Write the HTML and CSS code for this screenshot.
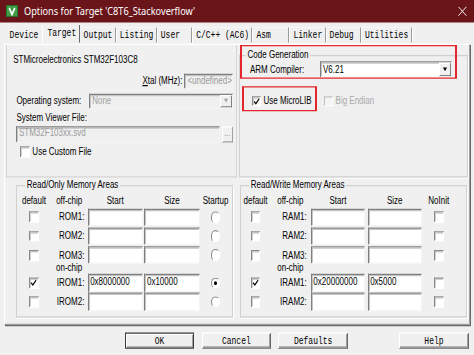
FILE: index.html
```html
<!DOCTYPE html>
<html lang="en">
<head>
    <meta charset="UTF-8">
    <meta name="viewport" content="width=device-width, initial-scale=1.0">
    <title>Options for Target</title>
    <link rel="stylesheet" href="styles.css">
</head>
<body>
    <div class="window">
        <div class="titlebar">
            <svg class="app-icon" viewBox="0 0 15 12" preserveAspectRatio="none">
                <rect width="15" height="12" fill="#256f2a"/>
                <rect x="1" y="1" width="13" height="10" fill="#3f9e46"/>
                <polyline points="4,3 7.5,9.5 11,3" fill="none" stroke="#fff" stroke-width="2"/>
            </svg>
            <span class="title">Options for Target 'C8T6_Stackoverflow'</span>
            <svg class="close" viewBox="0 0 11 10" preserveAspectRatio="none">
                <line x1="0.5" y1="0.5" x2="10.5" y2="9.5" stroke="#fff" stroke-width="1"/>
                <line x1="10.5" y1="0.5" x2="0.5" y2="9.5" stroke="#fff" stroke-width="1"/>
            </svg>
        </div>

        <div class="tabs">
            <span class="tab tab-first">Device</span>
            <span class="tab tab-active">Target</span>
            <span class="tab">Output</span>
            <span class="tab">Listing</span>
            <span class="tab tab-user">User</span>
            <span class="tab">C/C++ (AC6)</span>
            <span class="tab tab-asm">Asm</span>
            <span class="tab">Linker</span>
            <span class="tab tab-debug">Debug</span>
            <span class="tab">Utilities</span>
        </div>

        <div class="page">
            <div class="top">
                <div class="device">
                    <div class="chip-name">STMicroelectronics STM32F103C8</div>
                    <div class="xtal-row">
                        <span class="xtal-label"><u>X</u>tal (MHz):</span>
                        <span class="field field-disabled xtal">&lt;undefined&gt;</span>
                    </div>
                    <div class="os-row">
                        <span>Operating system:</span>
                        <div class="combo combo-disabled os">
                            <span class="combo-text">None</span>
                            <span class="combo-btn"><i class="arrow"></i></span>
                        </div>
                    </div>
                    <div class="svf-label">System Viewer File:</div>
                    <div class="svf-row">
                        <span class="field field-disabled svf">STM32F103xx.svd</span>
                        <span class="browse">...</span>
                    </div>
                    <div class="check-label custom"><span class="check"></span>Use Custom File</div>
                </div>

                <fieldset class="group codegen">
                    <legend>Code Generation</legend>
                    <div class="compiler-row">
                        <span class="compiler-label">ARM Compiler:</span>
                        <div class="combo compiler">
                            <span class="combo-text">V6.21</span>
                            <span class="combo-btn"><i class="arrow"></i></span>
                        </div>
                    </div>
                    <div class="lib-row">
                        <div class="check-label">
                            <span class="check"><svg viewBox="0 0 10 9" preserveAspectRatio="none"><polyline points="1.5,4.5 4,7 8.5,1.5" fill="none" stroke="#000" stroke-width="1.6"/></svg></span>Use MicroLIB
                        </div>
                        <div class="check-label check-disabled endian"><span class="check"></span>Big Endian</div>
                    </div>
                </fieldset>
            </div>

            <div class="memory">
                <fieldset class="group mem rom">
                    <legend>Read/Only Memory Areas</legend>
                    <div class="mem-grid">
                        <span class="hdr">default</span><span class="hdr">off-chip</span><span class="hdr">Start</span><span class="hdr">Size</span><span class="hdr">Startup</span>

                        <span class="cell-mark"><span class="check"></span></span>
                        <span class="mem-label">ROM1:</span>
                        <span class="mem-input"></span><span class="mem-input"></span>
                        <span class="cell-mark"><span class="radio"></span></span>

                        <span class="cell-mark"><span class="check"></span></span>
                        <span class="mem-label">ROM2:</span>
                        <span class="mem-input"></span><span class="mem-input"></span>
                        <span class="cell-mark"><span class="radio"></span></span>

                        <span class="cell-mark"><span class="check"></span></span>
                        <span class="mem-label">ROM3:</span>
                        <span class="mem-input"></span><span class="mem-input"></span>
                        <span class="cell-mark"><span class="radio"></span></span>

                        <span></span><span class="on-chip">on-chip</span><span></span><span></span><span></span>

                        <span class="cell-mark"><span class="check"><svg viewBox="0 0 10 9" preserveAspectRatio="none"><polyline points="1.5,4.5 4,7 8.5,1.5" fill="none" stroke="#000" stroke-width="1.6"/></svg></span></span>
                        <span class="mem-label">IROM1:</span>
                        <span class="mem-input">0x8000000</span><span class="mem-input">0x10000</span>
                        <span class="cell-mark"><span class="radio radio-on"></span></span>

                        <span class="cell-mark"><span class="check"></span></span>
                        <span class="mem-label">IROM2:</span>
                        <span class="mem-input"></span><span class="mem-input"></span>
                        <span class="cell-mark"><span class="radio"></span></span>
                    </div>
                </fieldset>

                <fieldset class="group mem ram">
                    <legend>Read/Write Memory Areas</legend>
                    <div class="mem-grid">
                        <span class="hdr">default</span><span class="hdr">off-chip</span><span class="hdr">Start</span><span class="hdr">Size</span><span class="hdr">NoInit</span>

                        <span class="cell-mark"><span class="check"></span></span>
                        <span class="mem-label">RAM1:</span>
                        <span class="mem-input"></span><span class="mem-input"></span>
                        <span class="cell-mark"><span class="check"></span></span>

                        <span class="cell-mark"><span class="check"></span></span>
                        <span class="mem-label">RAM2:</span>
                        <span class="mem-input"></span><span class="mem-input"></span>
                        <span class="cell-mark"><span class="check"></span></span>

                        <span class="cell-mark"><span class="check"></span></span>
                        <span class="mem-label">RAM3:</span>
                        <span class="mem-input"></span><span class="mem-input"></span>
                        <span class="cell-mark"><span class="check"></span></span>

                        <span></span><span class="on-chip">on-chip</span><span></span><span></span><span></span>

                        <span class="cell-mark"><span class="check"><svg viewBox="0 0 10 9" preserveAspectRatio="none"><polyline points="1.5,4.5 4,7 8.5,1.5" fill="none" stroke="#000" stroke-width="1.6"/></svg></span></span>
                        <span class="mem-label">IRAM1:</span>
                        <span class="mem-input">0x20000000</span><span class="mem-input">0x5000</span>
                        <span class="cell-mark"><span class="check"></span></span>

                        <span class="cell-mark"><span class="check"></span></span>
                        <span class="mem-label">IRAM2:</span>
                        <span class="mem-input"></span><span class="mem-input"></span>
                        <span class="cell-mark"><span class="check"></span></span>
                    </div>
                </fieldset>
            </div>

            <!-- red highlight frames drawn over the dialog -->
            <div class="mark mark-compiler"></div>
            <div class="mark mark-microlib"></div>
        </div>

        <div class="buttons">
            <span class="btn btn-default">OK</span>
            <span class="btn">Cancel</span>
            <span class="btn">Defaults</span>
            <span class="btn btn-help">Help</span>
        </div>
    </div>
</body>
</html>
```

FILE: styles.css
```css
* {
    box-sizing: border-box;
}
body {
    margin: 0;
    height: 355px;
    background: #f0f0f0;
    font-family: "Liberation Sans", Arial, sans-serif;
    font-size: 8px;
    color: #000;
}
/* the screenshot is squeezed sideways: lay out narrow and stretch it vertically */
.window {
    width: 474px;
    height: 284px;
    background: #f0f0f0;
    transform: scaleY(1.25);
    transform-origin: 0 0;
}
.titlebar {
    height: 17.6px;
    display: flex;
    align-items: center;
    padding-left: 5.6px;
    background: #6a1519;
    color: #fff;
}
.app-icon {
    width: 12px;
    height: 9.6px;
    margin-right: 6.4px;
}
.title {
    font-family: "Noto Sans", sans-serif;
    font-size: 9.2px;
}
.close {
    width: 8.8px;
    height: 8px;
    margin-left: auto;
    margin-right: 7.2px;
}

/* tabs */
.tabs {
    height: 17.6px;
    display: flex;
    align-items: flex-start;
    padding: 4px 0 0 4.8px;
    font-family: "Liberation Mono", monospace;
    font-size: 8px;
}
.tab {
    height: 12.8px;
    line-height: 12.8px;
    padding: 0 2.4px 0 4px;
    border-right: 1px solid #9a9a9a;
    box-shadow: 1px 0 0 #fff;
    white-space: pre;
}
.tab-first {
    padding: 0 3.2px 0 4.8px;
    border-right: 0;
    box-shadow: none;
}
.tab-active {
    margin-top: -1.6px;
    height: 14.4px;
    line-height: 14px;
    padding-left: 4.8px;
    border-left: 1px solid #fff;
    border-right-color: #696969;
    box-shadow: none;
}
.tab-user {
    padding-right: 11.2px;
}
.tab-asm {
    padding-right: 17.6px;
}
.tab-debug {
    padding-right: 6.4px;
}

/* tab page */
.page {
    position: relative;
    width: 465.6px;
    height: 224.8px;
    margin-left: 4px;
    border: 1px solid;
    border-color: #fff #a0a0a0 #a0a0a0 #fff;
    box-shadow: 1px 1px 0 #696969;
}
.top {
    display: flex;
    height: 105.6px;
}
.device {
    width: 231.2px;
    margin-left: 0.8px;
    border: 1px solid #d5d5d5;
    border-top: 0;
    padding: 5.6px 3.2px 0 6.4px;
}
.chip-name {
    line-height: 11.2px;
}
.xtal-row {
    display: flex;
    justify-content: flex-end;
    align-items: center;
    height: 12.8px;
    margin-top: 5.6px;
}
.xtal-label {
    margin-right: 1.6px;
}
.xtal {
    width: 48.8px;
}
.os-row {
    display: flex;
    justify-content: space-between;
    align-items: center;
    height: 12.8px;
    margin-top: 3.2px;
    padding-left: 3.2px;
}
.os {
    width: 144px;
}
.svf-label {
    margin-top: 2.4px;
    line-height: 9.6px;
    padding-left: 3.2px;
}
.svf-row {
    display: flex;
    height: 12.8px;
    margin-top: 1.6px;
    padding-left: 2.4px;
}
.svf {
    width: 204.8px;
}
.browse {
    width: 11.2px;
    height: 12.8px;
    margin-left: 1.6px;
    border: 1px solid;
    border-color: #fff #a0a0a0 #a0a0a0 #fff;
    color: #a0a0a0;
    text-align: center;
    line-height: 10.8px;
}
.custom {
    height: 9.6px;
    margin-top: 3.2px;
    padding-left: 7.2px;
}

/* group boxes */
.group {
    margin: 0;
    padding: 0;
    min-inline-size: 0;
    border: 1px solid #d0d0d0;
    box-shadow: 1px 1px 0 #fff;
}
.group legend {
    padding: 0 1.6px;
    line-height: 9.6px;
}
.codegen {
    width: 229.6px;
    height: 102.4px;
    margin: 3.2px 0 0 1.6px;
    padding: 0 4.8px 0 6.4px;
}
.compiler-row {
    display: flex;
    align-items: center;
    height: 12.8px;
    margin-left: 4px;
}
.compiler-label {
    width: 69.6px;
}
.compiler {
    width: 132.8px;
}
.lib-row {
    display: flex;
    align-items: center;
    height: 9.6px;
    margin-top: 14.4px;
    padding-left: 5.6px;
}
.endian {
    margin-left: 12px;
}

/* form controls */
.field, .combo, .mem-input {
    height: 12.8px;
    border: 1px solid;
    border-color: #7f7f7f #f4f4f4 #f4f4f4 #7f7f7f;
    box-shadow: inset 1px 1px 0 #c4c4c4;
    background: #fff;
    white-space: nowrap;
    overflow: hidden;
}
.field {
    line-height: 10.8px;
    padding: 0 2.4px;
}
.field-disabled {
    background: #f0f0f0;
    color: #9a9a9a;
}
.combo {
    display: flex;
    align-items: center;
}
.combo-text {
    flex: 1;
    padding-left: 2.4px;
}
.combo-btn {
    width: 12px;
    height: 10.8px;
    display: flex;
    align-items: center;
    justify-content: center;
    border: 1px solid;
    border-color: #fff #7f7f7f #7f7f7f #fff;
    background: #f0f0f0;
}
.arrow {
    border-top: 3.2px solid #000;
    border-left: 2.8px solid transparent;
    border-right: 2.8px solid transparent;
}
.combo-disabled {
    background: #f0f0f0;
    color: #a0a0a0;
}
.combo-disabled .arrow {
    border-top-color: #a0a0a0;
}
.check-label {
    display: flex;
    align-items: center;
    gap: 2.4px;
}
.check-disabled {
    color: #a8a8a8;
}
.check {
    flex: none;
    width: 9.6px;
    height: 8.8px;
    display: inline-flex;
    align-items: center;
    justify-content: center;
    border: 1px solid;
    border-color: #8a8a8a #fff #fff #8a8a8a;
    box-shadow: inset 1px 1px 0 #cfcfcf;
    background: #fff;
}
.check svg {
    width: 7.2px;
    height: 6.4px;
}
.check-disabled .check {
    border-color: #c0c0c0 #fff #fff #c0c0c0;
    box-shadow: none;
    background: #f4f4f4;
}
.radio {
    width: 9.6px;
    height: 9.6px;
    display: flex;
    align-items: center;
    justify-content: center;
    border: 1px solid;
    border-color: #8a8a8a #fff #fff #8a8a8a;
    border-radius: 50%;
    background: #fff;
}
.radio-on::after {
    content: "";
    width: 3.2px;
    height: 3.2px;
    border-radius: 50%;
    background: #000;
}

/* memory areas */
.memory {
    display: flex;
    margin-top: 1.6px;
}
.mem {
    height: 110.4px;
}
.mem legend {
    margin-left: 8px;
}
.rom {
    width: 216.8px;
    margin-left: 11.2px;
}
.ram {
    width: 226.4px;
    margin-left: 7.2px;
}
.mem-grid {
    display: grid;
    grid-template-rows: 11.2px 14.4px 14.4px 14.4px 6.4px 14.4px 14.4px;
    row-gap: 0.8px;
    align-items: center;
    margin-top: 1.6px;
}
.rom .mem-grid {
    grid-template-columns: 33.6px 33.6px 55.2px 55.2px 28.8px;
    column-gap: 1.6px;
}
.ram .mem-grid {
    grid-template-columns: 28.8px 36px 54.4px 54.4px 28.8px;
    column-gap: 2.4px;
}
.hdr {
    text-align: center;
    line-height: 11.2px;
}
.cell-mark {
    display: flex;
    justify-content: center;
}
.mem-label {
    text-align: right;
    padding-right: 1.6px;
}
.on-chip {
    text-align: center;
    line-height: 6.4px;
}
.mem-input {
    height: 14.4px;
    line-height: 10.8px;
    padding: 0.8px 1.6px;
}

/* red highlight frames */
.mark {
    position: absolute;
    border: 2px solid #e3262b;
    border-top-width: 1.6px;
    border-bottom-width: 1.6px;
}
.mark-compiler {
    left: 235.2px;
    top: 0;
    width: 216.8px;
    height: 27.2px;
}
.mark-microlib {
    left: 236.8px;
    top: 32.8px;
    width: 75.2px;
    height: 20px;
}

/* dialog buttons */
.buttons {
    display: flex;
    gap: 7.2px;
    margin-top: 5.6px;
    padding-left: 124.8px;
}
.btn {
    width: 69.6px;
    height: 13.6px;
    border: 1px solid;
    border-color: #fff #696969 #696969 #fff;
    box-shadow: inset -1px -1px 0 #a0a0a0;
    background: #f0f0f0;
    font-family: "Liberation Mono", monospace;
    font-size: 8px;
    line-height: 11.6px;
    text-align: center;
}
.btn-default {
    border-color: #3c3c3c;
    box-shadow: inset 1px 1px 0 #fff, inset -1px -1px 0 #a0a0a0;
}
.btn-help {
    margin-left: 44px;
}
```
